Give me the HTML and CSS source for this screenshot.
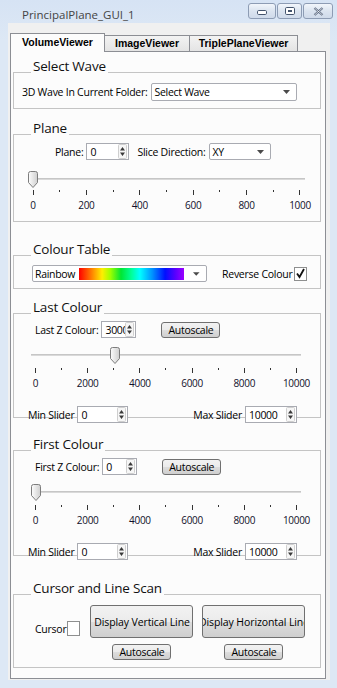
FILE: index.html
```html
<!DOCTYPE html>
<html>
<head>
<meta charset="utf-8">
<title>PrincipalPlane_GUI_1</title>
<link rel="stylesheet" href="styles.css">
</head>
<body>
<svg class="defs" width="0" height="0">
	<defs>
		<linearGradient id="thumbFill" x1="0" x2="1">
			<stop offset="0" stop-color="#fdfdfd"/>
			<stop offset="1" stop-color="#cfcfcf"/>
		</linearGradient>
	</defs>
</svg>
<div class="window">
	<!--标题栏-->
	<div class="titlebar">
		<span class="title">PrincipalPlane_GUI_1</span>
		<div class="caption">
			<span class="cap-btn cap-min"><svg width="10" height="5" viewBox="0 0 10 5"><rect x="0.5" y="0.5" width="9" height="4" rx="1.2" fill="#fff" stroke="#44546d"/></svg></span>
			<span class="cap-btn cap-max"><svg width="10" height="8" viewBox="0 0 10 8"><rect x="0.5" y="0.5" width="9" height="7" rx="1.2" fill="#fff" stroke="#44546d"/><rect x="3" y="3" width="4" height="2" fill="#44546d"/></svg></span>
			<span class="cap-btn cap-close"><svg width="11" height="9" viewBox="0 0 11 9"><path d="M1.5 1 L9.5 8 M9.5 1 L1.5 8" stroke="#5a6880" stroke-width="2.2"/><path d="M1.5 1 L9.5 8 M9.5 1 L1.5 8" stroke="#fff" stroke-width="0.7"/></svg></span>
		</div>
	</div>

	<div class="client">
		<div class="tabs">
			<span class="tab current">VolumeViewer</span>
			<span class="tab tab-image">ImageViewer</span>
			<span class="tab tab-triple">TriplePlaneViewer</span>
		</div>

		<div class="panel">
			<!--Select Wave-->
			<div class="group g-wave">
				<div class="group-head"><span class="lead"></span><span class="group-title">Select Wave</span><span class="rest"></span></div>
				<div class="group-body">
					<div class="row">
						<span class="label">3D Wave In Current Folder:</span>
						<span class="select sel-wave"><span class="sel-val">Select Wave</span><svg width="7" height="4" viewBox="0 0 7 4"><path d="M0 0 H7 L3.5 4 Z" fill="#4a4a4a"/></svg></span>
					</div>
				</div>
			</div>

			<!--Plane-->
			<div class="group g-plane">
				<div class="group-head"><span class="lead"></span><span class="group-title">Plane</span><span class="rest"></span></div>
				<div class="group-body">
					<div class="row">
						<span class="label">Plane:</span>
						<span class="spin spin-plane"><span class="spin-val">0</span><svg class="spin-arrows" width="9" height="15" viewBox="0 0 9 15"><rect x="0.5" y="0.5" width="8" height="14" rx="1" fill="#f6f6f6" stroke="#cfcfcf"/><path d="M2 6.5 L4.5 3 L7 6.5 Z M2 8.5 L4.5 12 L7 8.5 Z" fill="#3a3a3a"/></svg></span>
						<span class="label label-slice">Slice Direction:</span>
						<span class="select sel-xy"><span class="sel-val">XY</span><svg width="7" height="4" viewBox="0 0 7 4"><path d="M0 0 H7 L3.5 4 Z" fill="#4a4a4a"/></svg></span>
					</div>
					<div class="slider slider-plane">
						<div class="track-wrap">
							<div class="track"></div>
							<svg class="thumb" style="left:0px" width="10" height="17" viewBox="0 0 10 17"><path d="M2.5 0.5 H7.5 Q9.5 0.5 9.5 2.5 V11.5 L5 16.5 L0.5 11.5 V2.5 Q0.5 0.5 2.5 0.5 Z" fill="url(#thumbFill)" stroke="#7d7d7d"/></svg>
						</div>
						<div class="ticks">
							<i class="major"></i><i></i><i class="major"></i><i></i><i class="major"></i><i></i><i class="major"></i><i></i><i class="major"></i><i></i><i class="major"></i>
						</div>
						<div class="tick-labels">
							<span>0</span><span>200</span><span>400</span><span>600</span><span>800</span><span>1000</span>
						</div>
					</div>
				</div>
			</div>

			<!--Colour Table-->
			<div class="group g-table">
				<div class="group-head"><span class="lead"></span><span class="group-title">Colour Table</span><span class="rest"></span></div>
				<div class="group-body">
					<div class="row">
						<span class="select sel-table"><span class="sel-val">Rainbow</span><span class="rainbow"></span><svg width="7" height="4" viewBox="0 0 7 4"><path d="M0 0 H7 L3.5 4 Z" fill="#4a4a4a"/></svg></span>
						<span class="label label-reverse">Reverse Colour</span>
						<span class="check"><svg width="11" height="11" viewBox="0 0 11 11"><path d="M2 5.5 L4.5 9 L9 1" fill="none" stroke="#111" stroke-width="1.8"/></svg></span>
					</div>
				</div>
			</div>

			<!--Last Colour-->
			<div class="group g-last">
				<div class="group-head"><span class="lead"></span><span class="group-title">Last Colour</span><span class="rest"></span></div>
				<div class="group-body">
					<div class="row row-z">
						<span class="label">Last Z Colour:</span>
						<span class="spin spin-z"><span class="spin-val">3000</span><svg class="spin-arrows" width="9" height="15" viewBox="0 0 9 15"><rect x="0.5" y="0.5" width="8" height="14" rx="1" fill="#f6f6f6" stroke="#cfcfcf"/><path d="M2 6.5 L4.5 3 L7 6.5 Z M2 8.5 L4.5 12 L7 8.5 Z" fill="#3a3a3a"/></svg></span>
						<span class="btn btn-auto">Autoscale</span>
					</div>
					<div class="slider slider-colour">
						<div class="track-wrap">
							<div class="track"></div>
							<svg class="thumb" style="left:78.5px" width="10" height="17" viewBox="0 0 10 17"><path d="M2.5 0.5 H7.5 Q9.5 0.5 9.5 2.5 V11.5 L5 16.5 L0.5 11.5 V2.5 Q0.5 0.5 2.5 0.5 Z" fill="url(#thumbFill)" stroke="#7d7d7d"/></svg>
						</div>
						<div class="ticks">
							<i class="major"></i><i></i><i class="major"></i><i></i><i class="major"></i><i></i><i class="major"></i><i></i><i class="major"></i><i></i><i class="major"></i>
						</div>
						<div class="tick-labels">
							<span>0</span><span>2000</span><span>4000</span><span>6000</span><span>8000</span><span>10000</span>
						</div>
					</div>
					<div class="row row-minmax">
						<span class="pair">
							<span class="label">Min Slider</span>
							<span class="spin spin-min"><span class="spin-val">0</span><svg class="spin-arrows" width="9" height="15" viewBox="0 0 9 15"><rect x="0.5" y="0.5" width="8" height="14" rx="1" fill="#f6f6f6" stroke="#cfcfcf"/><path d="M2 6.5 L4.5 3 L7 6.5 Z M2 8.5 L4.5 12 L7 8.5 Z" fill="#3a3a3a"/></svg></span>
						</span>
						<span class="pair">
							<span class="label">Max Slider</span>
							<span class="spin spin-max"><span class="spin-val">10000</span><svg class="spin-arrows" width="9" height="15" viewBox="0 0 9 15"><rect x="0.5" y="0.5" width="8" height="14" rx="1" fill="#f6f6f6" stroke="#cfcfcf"/><path d="M2 6.5 L4.5 3 L7 6.5 Z M2 8.5 L4.5 12 L7 8.5 Z" fill="#3a3a3a"/></svg></span>
						</span>
					</div>
				</div>
			</div>

			<!--First Colour-->
			<div class="group g-first">
				<div class="group-head"><span class="lead"></span><span class="group-title">First Colour</span><span class="rest"></span></div>
				<div class="group-body">
					<div class="row row-z">
						<span class="label">First Z Colour:</span>
						<span class="spin spin-z"><span class="spin-val">0</span><svg class="spin-arrows" width="9" height="15" viewBox="0 0 9 15"><rect x="0.5" y="0.5" width="8" height="14" rx="1" fill="#f6f6f6" stroke="#cfcfcf"/><path d="M2 6.5 L4.5 3 L7 6.5 Z M2 8.5 L4.5 12 L7 8.5 Z" fill="#3a3a3a"/></svg></span>
						<span class="btn btn-auto">Autoscale</span>
					</div>
					<div class="slider slider-colour">
						<div class="track-wrap">
							<div class="track"></div>
							<svg class="thumb" style="left:0px" width="10" height="17" viewBox="0 0 10 17"><path d="M2.5 0.5 H7.5 Q9.5 0.5 9.5 2.5 V11.5 L5 16.5 L0.5 11.5 V2.5 Q0.5 0.5 2.5 0.5 Z" fill="url(#thumbFill)" stroke="#7d7d7d"/></svg>
						</div>
						<div class="ticks">
							<i class="major"></i><i></i><i class="major"></i><i></i><i class="major"></i><i></i><i class="major"></i><i></i><i class="major"></i><i></i><i class="major"></i>
						</div>
						<div class="tick-labels">
							<span>0</span><span>2000</span><span>4000</span><span>6000</span><span>8000</span><span>10000</span>
						</div>
					</div>
					<div class="row row-minmax">
						<span class="pair">
							<span class="label">Min Slider</span>
							<span class="spin spin-min"><span class="spin-val">0</span><svg class="spin-arrows" width="9" height="15" viewBox="0 0 9 15"><rect x="0.5" y="0.5" width="8" height="14" rx="1" fill="#f6f6f6" stroke="#cfcfcf"/><path d="M2 6.5 L4.5 3 L7 6.5 Z M2 8.5 L4.5 12 L7 8.5 Z" fill="#3a3a3a"/></svg></span>
						</span>
						<span class="pair">
							<span class="label">Max Slider</span>
							<span class="spin spin-max"><span class="spin-val">10000</span><svg class="spin-arrows" width="9" height="15" viewBox="0 0 9 15"><rect x="0.5" y="0.5" width="8" height="14" rx="1" fill="#f6f6f6" stroke="#cfcfcf"/><path d="M2 6.5 L4.5 3 L7 6.5 Z M2 8.5 L4.5 12 L7 8.5 Z" fill="#3a3a3a"/></svg></span>
						</span>
					</div>
				</div>
			</div>

			<!--Cursor and Line Scan-->
			<div class="group g-cursor">
				<div class="group-head"><span class="lead"></span><span class="group-title">Cursor and Line Scan</span><span class="rest"></span></div>
				<div class="group-body">
					<div class="row row-cursor">
						<span class="cursor-pick">
							<span class="label">Cursor</span>
							<span class="check"></span>
						</span>
						<span class="line-col">
							<span class="btn btn-big">Display Vertical Line</span>
							<span class="btn btn-auto">Autoscale</span>
						</span>
						<span class="line-col">
							<span class="btn btn-big">Display Horizontal Line</span>
							<span class="btn btn-auto">Autoscale</span>
						</span>
					</div>
				</div>
			</div>
		</div>
	</div>
</div>
</body>
</html>
```
FILE: styles.css
```css
*{margin:0; padding:0; box-sizing:border-box;}
body{background:#dbe7f5; font-family:"Open Sans","Noto Sans",sans-serif; color:#000;}
.defs{position:absolute;}
.window{width:337px; height:688px; background:linear-gradient(#d6e3f4,#dde8f5 40px,#dde8f5);}

/*标题栏*/
.titlebar{height:23px; display:flex; justify-content:space-between; align-items:flex-start;}
.titlebar .title{font-size:11.5px; color:#444; margin:8px 0 0 22px; line-height:14px;}
.caption{display:flex; gap:1px; margin:3px 4px 0 0;}
.cap-btn{height:16px; display:flex; align-items:center; justify-content:center; border:1px solid #8d9cb4; border-radius:3px; background:linear-gradient(#f2f6fb,#dbe4f0 50%,#cfdaea);}
.cap-min{width:28px; align-items:flex-end; padding-bottom:3px;}
.cap-max{width:25px;}
.cap-close{width:30px;}

/*客户区*/
.client{margin-left:8px; width:322px; height:657px; background:#f0f0f0; padding-top:10px;}
.tabs{display:flex; align-items:flex-end; margin-left:2px; height:18px;}
.tab{height:16px; border:1px solid #8c8e94; border-bottom:none; background:linear-gradient(#f3f3f3,#e4e4e4); font-weight:bold; font-size:10.5px; line-height:15px; text-align:center; font-family:"Liberation Sans","Noto Sans",sans-serif; margin-left:-1px;}
.tab.current{width:95px; margin-left:0; background:#fcfcfc; position:relative; z-index:1; margin-bottom:-1px; height:19px; line-height:17px;}
.tab-image{width:86px;}
.tab-triple{width:109px;}

.panel{margin-left:2px; width:316px; height:628px; border:1px solid #8c8e94; background:#fcfcfc; padding-top:5px;}

/*分组框*/
.group{margin-left:2px; width:308px;}
.group-head{display:flex; align-items:flex-end; height:16px;}
.group-head .lead{width:18px; border-bottom:1px solid #c4c4c4;}
.group-head .rest{flex:1; border-bottom:1px solid #c4c4c4;}
.group-title{font-size:13.5px; line-height:16px; padding:0 2px; color:#111; letter-spacing:-0.2px; position:relative; top:1px;}
.group-body{border:1px solid #c4c4c4; border-top:none;}

.g-wave .group-body{height:36px; padding:10px 0 0 8px;}
.g-plane{margin-top:10px;}
.g-plane .group-body{height:87px; padding:8px 0 0 41px;}
.g-table{margin-top:18px;}
.g-table .group-body{height:33px; padding:9px 0 0 18px;}
.g-last{margin-top:9px;}
.g-last .group-body, .g-first .group-body{height:104px; padding:7px 0 0 21px;}
.g-first{margin-top:17px;}
.g-first .group-body{height:105px;}
.g-cursor{margin-top:23px;}
.g-cursor .group-body{height:73px; padding:10px 0 0 21px;}

.row{display:flex; align-items:center;}
.label{font-size:10.5px; line-height:14px; white-space:nowrap; letter-spacing:-0.25px;}

/*下拉框*/
.select{display:flex; align-items:center; height:18px; border:1px solid #a9abb2; border-radius:2px; background:#fff; padding:0 6px 0 3px;}
.select .sel-val{flex:1; font-size:10.5px; letter-spacing:-0.3px; white-space:nowrap;}
.sel-wave{width:146px; margin-left:3px;}
.sel-xy{width:62px; height:17px; margin-left:3px;}
.label-slice{margin-left:8px;}
.sel-table{width:175px; height:17px; padding:0 6px 0 1px;}
.sel-table .sel-val{flex:none; width:45px; padding-left:1px;}
.rainbow{width:113px; height:12px; margin-right:9px; background:linear-gradient(to right,#ff0000,#ff6a00 10%,#ffee00 22%,#9cff00 30%,#00e633 40%,#00ff9a 50%,#00ffff 58%,#0090ff 70%,#0010ff 82%,#5a00ff 92%,#9b00ff);}
.label-reverse{margin-left:15px;}

/*复选框*/
.check{width:13px; height:14px; border:1px solid #8e8f8f; background:#fff; display:flex; align-items:center; justify-content:center; margin-left:1px;}

/*数字框*/
.spin{display:flex; align-items:center; height:17px; border:1px solid #a9abb2; background:#fff; margin-left:3px; padding:0 1px 0 3px; overflow:hidden;}
.spin .spin-val{flex:1; font-size:10.5px; letter-spacing:-0.3px; overflow:hidden; white-space:nowrap; line-height:14px;}
.spin-arrows{flex:none;}
.spin-plane{width:43px;}
.spin-z{width:35px;}
.spin-min{width:51px;}
.spin-max{width:52px;}

/*按钮*/
.btn{display:flex; align-items:center; justify-content:center; border:1px solid #707070; border-radius:3px; background:linear-gradient(#f2f2f2,#ebebeb 50%,#dddddd 51%,#cfcfcf); font-size:10.5px; letter-spacing:-0.3px; white-space:nowrap; overflow:hidden;}
.btn-auto{width:59px; height:16px;}
.row-z .btn-auto{margin-left:25px;}
.btn-big{width:103px; height:33px; letter-spacing:-0.1px;}

/*滑块*/
.slider{margin-top:11px;}
.track-wrap{position:relative; height:17px;}
.track{position:absolute; top:7px; left:0; right:0; height:2px; background:#d9d9d9; border-top:1px solid #c6c6c6;}
.thumb{position:absolute; top:0;}
.ticks{display:flex; justify-content:space-between; align-items:flex-start; height:5px; margin-top:2px;}
.ticks i{display:block; width:1px; height:2px; background:#333;}
.ticks i.major{height:5px;}
.tick-labels{display:flex; justify-content:space-between; margin-top:4px; height:12px;}
.tick-labels span{width:1px; display:flex; justify-content:center; font-size:10px; line-height:12px; letter-spacing:-0.3px; white-space:nowrap; color:#10102a;}

.slider-plane{margin-left:-23.5px; width:273px;}
.slider-plane .ticks, .slider-plane .tick-labels{margin-left:1px; width:268px;}
.slider-plane .thumb{margin-left:-3.8px;}

.slider-colour{margin-left:-4px; width:270px; margin-top:9px;}
.slider-colour .ticks, .slider-colour .tick-labels{margin-left:4px; width:262px;}
.slider-colour .ticks{margin-top:4px;}

.row-minmax{justify-content:space-between; padding-right:23px; margin-left:-7px; margin-top:17px;}
.pair{display:flex; align-items:center;}

/*光标*/
.row-cursor{align-items:flex-start;}
.cursor-pick{display:flex; align-items:center; margin-top:16px;}
.cursor-pick .check{width:13px; height:15px;}
.line-col{display:flex; flex-direction:column; align-items:center; gap:6px; margin-left:10px;}
.line-col + .line-col{margin-left:9px;}
```
